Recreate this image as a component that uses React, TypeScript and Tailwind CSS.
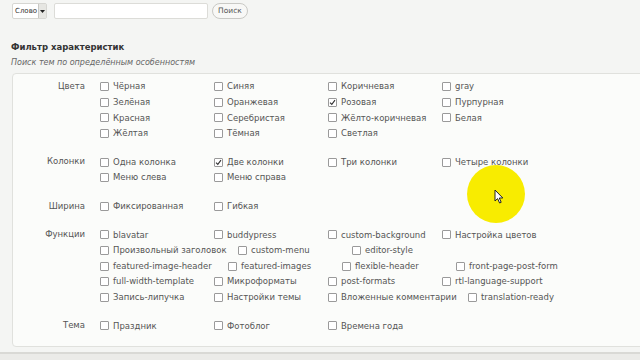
import React from 'react';

type Item = { label: string; w?: number; checked?: boolean };

const groups: { title: string; rows: Item[][] }[] = [
  {
    title: 'Цвета',
    rows: [
      [{ label: 'Чёрная' }, { label: 'Синяя' }, { label: 'Коричневая' }, { label: 'gray' }],
      [{ label: 'Зелёная' }, { label: 'Оранжевая' }, { label: 'Розовая', checked: true }, { label: 'Пурпурная' }],
      [{ label: 'Красная' }, { label: 'Серебристая' }, { label: 'Жёлто-коричневая' }, { label: 'Белая' }],
      [{ label: 'Жёлтая' }, { label: 'Тёмная' }, { label: 'Светлая' }],
    ],
  },
  {
    title: 'Колонки',
    rows: [
      [{ label: 'Одна колонка' }, { label: 'Две колонки', checked: true }, { label: 'Три колонки' }, { label: 'Четыре колонки' }],
      [{ label: 'Меню слева' }, { label: 'Меню справа' }],
    ],
  },
  {
    title: 'Ширина',
    rows: [[{ label: 'Фиксированная' }, { label: 'Гибкая' }]],
  },
  {
    title: 'Функции',
    rows: [
      [{ label: 'blavatar' }, { label: 'buddypress' }, { label: 'custom-background' }, { label: 'Настройка цветов' }],
      [{ label: 'Произвольный заголовок', w: 138 }, { label: 'custom-menu' }, { label: 'editor-style' }],
      [{ label: 'featured-image-header', w: 128 }, { label: 'featured-images' }, { label: 'flexible-header' }, { label: 'front-page-post-form' }],
      [{ label: 'full-width-template' }, { label: 'Микроформаты' }, { label: 'post-formats' }, { label: 'rtl-language-support' }],
      [{ label: 'Запись-липучка' }, { label: 'Настройки темы' }, { label: 'Вложенные комментарии', w: 140 }, { label: 'translation-ready' }],
    ],
  },
  {
    title: 'Тема',
    rows: [[{ label: 'Праздник' }, { label: 'Фотоблог' }, { label: 'Времена года' }]],
  },
];

function Checkbox({ checked }: { checked?: boolean }) {
  return (
    <span className="w-[9px] h-[9px] shrink-0 border border-[#9a9a9a] rounded-[1px] bg-white flex items-center justify-center">
      {checked && (
        <svg width="7" height="7" viewBox="0 0 7 7">
          <path d="M1 3.6 L2.8 5.4 L6 1.2" fill="none" stroke="#333" strokeWidth="1.1" />
        </svg>
      )}
    </span>
  );
}

export default function App() {
  return (
    <div
      className="w-[640px] h-[360px] overflow-hidden bg-[#f4f5f3] relative text-[#555]"
      style={{ fontFamily: '"DejaVu Sans", Verdana, sans-serif' }}
    >
      {/* search bar */}
      <div className="flex items-center pt-[3px] pl-[12px] h-[19px]">
        <div className="flex items-center w-[35px] h-[16px] bg-white border border-[#d6d6d2] rounded-[2px] pl-[2px] text-[7px] text-[#333]">
          <span className="flex-1">Слово</span>
          <span className="w-[8px] h-[14px] bg-[#e6e6e2] border-l border-[#c8c8c4] flex items-center justify-center">
            <svg width="5" height="3" viewBox="0 0 5 3">
              <path d="M0 0 L5 0 L2.5 3 Z" fill="#222" />
            </svg>
          </span>
        </div>
        <div className="ml-[7px] w-[154px] h-[16px] bg-white border border-[#dcdcd8] rounded-[2px]" />
        <div className="ml-[4px] w-[36px] h-[16px] flex items-center justify-center border border-[#c9c9c5] rounded-full bg-[#f8f8f6] text-[7.5px] text-[#555]">
          Поиск
        </div>
      </div>

      {/* heading */}
      <div className="pl-[11px] pt-[22px] text-[8.5px] font-bold text-[#333] leading-[12px]">Фильтр характеристик</div>
      <div className="pl-[11px] pt-[4px] text-[8px] italic text-[#666] leading-[12px]">
        Поиск тем по определённым особенностям
      </div>

      {/* filter box */}
      <div className="ml-[12px] mt-[4px] w-[640px] h-[274px] bg-[#fbfcfa] border border-[#e0e1dd] rounded-[4px] pt-[5px]">
        {groups.map((g) => (
          <div key={g.title} className="flex mb-[13px]">
            <div className="w-[72px] text-right text-[8.5px] leading-[15.6px] text-[#555]">{g.title}</div>
            <div className="ml-[15px] flex flex-col">
              {g.rows.map((row, i) => (
                <div key={i} className="flex h-[15.6px] items-center">
                  {row.map((it) => (
                    <div
                      key={it.label}
                      className="flex items-center shrink-0 whitespace-nowrap"
                      style={{ width: it.w ?? 114 }}
                    >
                      <Checkbox checked={it.checked} />
                      <span className="ml-[4px] text-[8.5px] text-[#555]">{it.label}</span>
                    </div>
                  ))}
                </div>
              ))}
            </div>
          </div>
        ))}
      </div>

      {/* bottom strip */}
      <div className="absolute left-0 right-0 top-[352px] h-[8px] bg-[#ebebe8] border-t-[2px] border-[#d9d9d5]" />

      {/* cursor highlight */}
      <div className="absolute left-[467px] top-[165px] w-[58px] h-[58px] rounded-full bg-[#f8ec00] blur-[0.6px]" />
      <svg className="absolute left-[494px] top-[189px]" width="10" height="15" viewBox="0 0 10 15">
        <path d="M1 1 L1 12 L3.6 9.6 L5.6 14 L7.2 13.3 L5.3 9 L8.8 9 Z" fill="#fff" stroke="#222" strokeWidth="1" />
      </svg>
    </div>
  );
}
